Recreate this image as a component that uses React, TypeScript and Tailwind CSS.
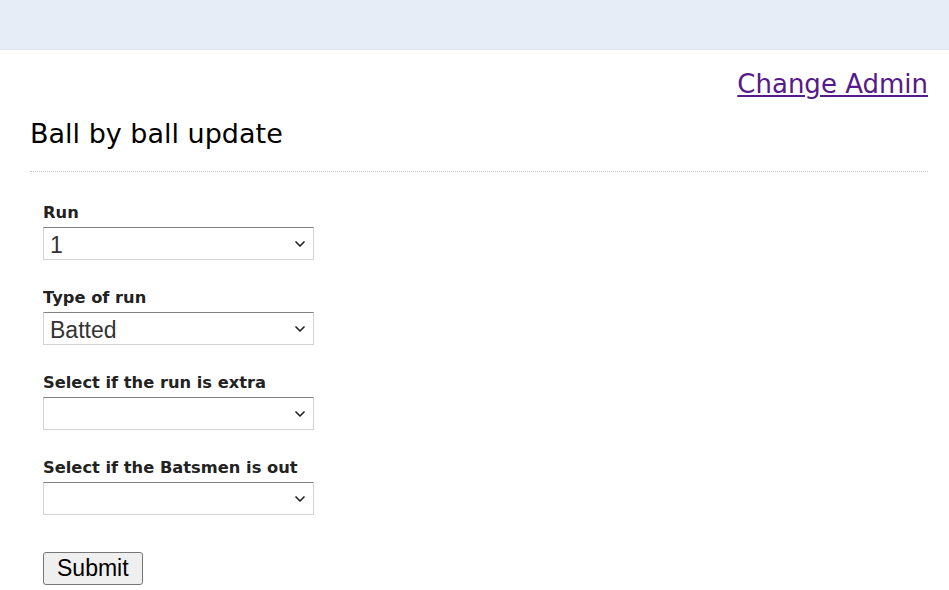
import { ChevronDown } from 'lucide-react';

const fields = [
  { label: 'Run', value: '1', options: ['1', '2', '3', '4', '5', '6'] },
  { label: 'Type of run', value: 'Batted', options: ['Batted', 'Bye', 'Leg bye'] },
  { label: 'Select if the run is extra', value: '', options: ['', 'Wide', 'No ball'] },
  { label: 'Select if the Batsmen is out', value: '', options: ['', 'Bowled', 'Caught', 'Run out'] },
];

function Field({ label, value, options }: { label: string; value: string; options: string[] }) {
  return (
    <div className="flex flex-col">
      <label className="font-['DejaVu_Sans',Verdana,sans-serif] text-[16.3px] font-bold leading-[23px] text-[#222]">{label}</label>
      <div className="relative mt-[3px] w-[271px]">
        <select
          defaultValue={value}
          className="h-[33px] w-full appearance-none border border-[#d3d3d3] border-t-[#808080] bg-white pl-[6px] font-['Liberation_Sans',Arial,sans-serif] text-[23px] text-[#333] outline-none"
        >
          {options.map((o) => (
            <option key={o} value={o}>{o}</option>
          ))}
        </select>
        <ChevronDown size={16} strokeWidth={2.5} className="pointer-events-none absolute right-[6px] top-[9px] text-[#222]" />
      </div>
    </div>
  );
}

export default function App() {
  return (
    <div className="min-h-[590px] bg-white">
      {/* HEADER BAND */}
      <div className="h-[50px] border-b border-[#dde4ee] bg-[#e6edf7]" />

      <div className="px-[21px] pl-[30px]">
        <div className="flex justify-end pt-[16px]">
          <a href="#" className="font-['DejaVu_Sans',Verdana,sans-serif] text-[26px] leading-[36px] text-[#551a8b] underline">
            Change Admin
          </a>
        </div>

        <h1 className="mt-[14px] font-['DejaVu_Sans',Verdana,sans-serif] text-[27px] leading-[36px] text-black">
          Ball by ball update
        </h1>
        <div className="mt-[19px] border-b border-dotted border-[#c8c8c8]" />

        <form className="flex flex-col gap-[26px] pl-[13px] pt-[29px]" onSubmit={(e) => e.preventDefault()}>
          {fields.map((f) => (
            <Field key={f.label} {...f} />
          ))}
          <div className="pt-[11px]">
            <button
              type="submit"
              className="h-[33px] rounded-[3px] border border-[#767676] bg-[#efefef] px-[13px] font-['Liberation_Sans',Arial,sans-serif] text-[23px] leading-none text-black"
            >
              Submit
            </button>
          </div>
        </form>
      </div>
    </div>
  );
}
